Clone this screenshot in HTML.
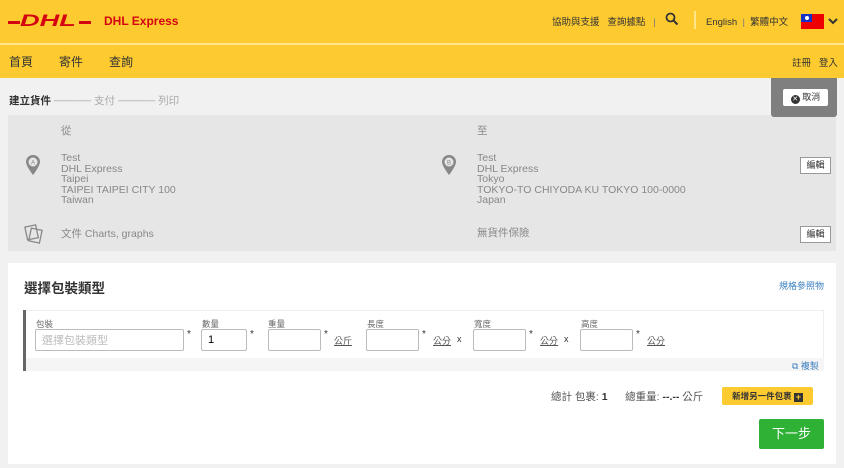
<!DOCTYPE html>
<html><head><meta charset="utf-8"><style>
*{margin:0;padding:0;box-sizing:border-box}
body{width:844px;height:468px;overflow:hidden;background:#f1f1f1;font-family:"Liberation Sans","Noto Sans CJK TC",sans-serif;color:#333;position:relative}
.a{position:absolute}
.t{font-size:10.5px;color:#888;line-height:10.5px}
.btn{position:absolute;background:#fff;border:1px solid #999;font-size:9px;color:#333;text-align:center;line-height:15px;height:17px;width:31px}
input{position:absolute;border:1px solid #bbb;border-radius:2px;height:22px;background:#fff;font-size:11px;padding-left:6px;font-family:inherit}
.lb{position:absolute;font-size:8.5px;color:#666}
.st{position:absolute;font-size:10px;color:#333}
.u{position:absolute;font-size:9px;color:#555;text-decoration:underline}
</style></head><body>
<div class="a" style="left:0;top:0;width:844px;height:43px;background:#fdcb30"></div>
<div class="a" style="left:0;top:43px;width:844px;height:2px;background:#fde58a"></div>
<div class="a" style="left:0;top:45px;width:844px;height:33px;background:#fdcb30"></div>
<div class="a" style="left:8px;top:21px;width:12px;height:3px;background:#d40511"></div>
<div class="a" style="left:20px;top:11px;font:italic 900 17px 'Liberation Sans',sans-serif;color:#d40511;transform:scaleX(1.6);transform-origin:left top">DHL</div>
<div class="a" style="left:79px;top:21px;width:12px;height:3px;background:#d40511"></div>
<div class="a" style="left:104px;top:14px;font-size:12px;font-weight:bold;color:#d40511">DHL Express</div>
<div class="a" style="left:552px;top:14px;font-size:9.5px;color:#333">協助與支援&nbsp;&nbsp;&nbsp;查詢據點&nbsp;&nbsp;&nbsp;<span style="color:#777">|</span></div>
<svg class="a" style="left:665px;top:12px" width="14" height="14" viewBox="0 0 14 14"><circle cx="5.5" cy="5.5" r="4" fill="none" stroke="#333" stroke-width="1.8"/><path d="M8.5 8.5L12.5 12.5" stroke="#333" stroke-width="2"/></svg>
<div class="a" style="left:694px;top:11px;width:2px;height:18px;background:#fde58a"></div>
<div class="a" style="left:706px;top:14px;font-size:9.5px;color:#333">English&nbsp;&nbsp;<span style="color:#777">|</span>&nbsp;&nbsp;繁體中文</div>
<div class="a" style="left:801px;top:14px;width:23px;height:15px;background:#e00"></div>
<div class="a" style="left:801px;top:14px;width:11px;height:8px;background:#1530c8"></div>
<div class="a" style="left:805px;top:16px;width:4px;height:4px;background:#fff;border-radius:50%"></div>
<svg class="a" style="left:828px;top:18px" width="10" height="7"><path d="M1 1L5 5L9 1" stroke="#333" stroke-width="2" fill="none"/></svg>
<div class="a" style="left:9px;top:53px;font-size:12px;color:#333">首頁<span style="margin-left:26px">寄件</span><span style="margin-left:26px">查詢</span></div>
<div class="a" style="left:792px;top:55px;font-size:9.5px;color:#333">註冊&nbsp;&nbsp;&nbsp;登入</div>
<div class="a" style="left:9px;top:93px;font-size:10.5px;color:#333;font-weight:bold">建立貨件 <span style="font-weight:normal;color:#aaa">───── 支付 ───── 列印</span></div>
<div class="a" style="left:8px;top:115px;width:828px;height:136px;background:#e6e6e6"></div>
<div class="a" style="left:771px;top:78px;width:66px;height:39px;background:#7f7f7f;border-radius:0 0 3px 3px"></div>
<div class="a" style="left:783px;top:89px;width:45px;height:17px;background:#fff;border-radius:2px;font-size:9px;line-height:17px;text-align:center;color:#333"><span style="display:inline-block;width:9px;height:9px;border-radius:50%;background:#333;color:#fff;font-size:7px;line-height:9px;vertical-align:-1px">✕</span> 取消</div>
<div class="a t" style="left:61px;top:126px">從</div>
<div class="a t" style="left:477px;top:126px">至</div>
<svg class="a" style="left:25px;top:154px" width="16" height="22" viewBox="0 0 16 22"><path d="M8 1C4 1 1 4 1 8C1 12 8 21 8 21C8 21 15 12 15 8C15 4 12 1 8 1Z" fill="#888"/><circle cx="8" cy="8" r="4.5" fill="#e6e6e6"/><text x="8" y="10.5" font-size="6" text-anchor="middle" fill="#888">A</text></svg>
<svg class="a" style="left:441px;top:154px" width="16" height="22" viewBox="0 0 16 22"><path d="M8 1C4 1 1 4 1 8C1 12 8 21 8 21C8 21 15 12 15 8C15 4 12 1 8 1Z" fill="#888"/><circle cx="8" cy="8" r="4.5" fill="#e6e6e6"/><text x="8" y="10.5" font-size="6" text-anchor="middle" fill="#888">B</text></svg>
<div class="a t" style="left:61px;top:153px">Test<br>DHL Express<br>Taipei<br>TAIPEI TAIPEI CITY 100<br>Taiwan</div>
<div class="a t" style="left:477px;top:153px">Test<br>DHL Express<br>Tokyo<br>TOKYO-TO CHIYODA KU TOKYO 100-0000<br>Japan</div>
<svg class="a" style="left:24px;top:224px" width="20" height="20"><rect x="2" y="2" width="11" height="13" transform="rotate(-12 7 8)" fill="none" stroke="#888" stroke-width="1.3"/><rect x="6" y="5" width="11" height="13" transform="rotate(12 11 11)" fill="none" stroke="#888" stroke-width="1.3"/></svg>
<div class="a t" style="left:61px;top:229px">文件 Charts, graphs</div>
<div class="a t" style="left:477px;top:228px">無貨件保險</div>
<div class="btn" style="left:800px;top:157px">編輯</div>
<div class="btn" style="left:800px;top:226px">編輯</div>
<div class="a" style="left:8px;top:263px;width:828px;height:201px;background:#fff"></div>
<div class="a" style="left:24px;top:277px;font-size:13.5px;color:#333;font-weight:bold">選擇包裝類型</div>
<div class="a" style="left:779px;top:279px;font-size:9px;color:#3a7fc0">規格參照物</div>
<div class="a" style="left:23px;top:310px;width:801px;height:61px;border:1px solid #eee;background:#fff"></div>
<div class="a" style="left:24px;top:358px;width:800px;height:13px;background:#f5f5f5"></div>
<div class="a" style="left:23px;top:310px;width:3px;height:61px;background:#666"></div>
<div class="lb" style="left:36px;top:318px">包裝</div>
<input style="left:35px;top:329px;width:149px;color:#bbb" value="選擇包裝類型">
<div class="st" style="left:187px;top:329px">*</div>
<div class="lb" style="left:202px;top:318px">數量</div>
<input style="left:201px;top:329px;width:46px" value="1">
<div class="st" style="left:250px;top:329px">*</div>
<div class="lb" style="left:268px;top:318px">重量</div>
<input style="left:268px;top:329px;width:53px">
<div class="st" style="left:324px;top:329px">*</div>
<div class="u" style="left:334px;top:334px">公斤</div>
<div class="lb" style="left:367px;top:318px">長度</div>
<input style="left:366px;top:329px;width:53px">
<div class="st" style="left:422px;top:329px">*</div>
<div class="u" style="left:433px;top:334px">公分</div><div class="st" style="left:457px;top:334px;font-size:9px">x</div>
<div class="lb" style="left:474px;top:318px">寬度</div>
<input style="left:473px;top:329px;width:53px">
<div class="st" style="left:529px;top:329px">*</div>
<div class="u" style="left:540px;top:334px">公分</div><div class="st" style="left:564px;top:334px;font-size:9px">x</div>
<div class="lb" style="left:581px;top:318px">高度</div>
<input style="left:580px;top:329px;width:53px">
<div class="st" style="left:636px;top:329px">*</div>
<div class="u" style="left:647px;top:334px">公分</div>
<div class="a" style="left:792px;top:359px;font-size:9px;color:#3a7fc0">⧉ 複製</div>
<div class="a" style="left:551px;top:389px;font-size:10.5px;color:#555">總計 包裹: <b style="color:#333">1</b>&nbsp;&nbsp;&nbsp;&nbsp;&nbsp;&nbsp;總重量: <b style="color:#333">--.--</b> 公斤</div>
<div class="a" style="left:722px;top:387px;width:91px;height:18px;background:#fdcb30;border-radius:2px;font-size:8.5px;line-height:18px;text-align:center;color:#333;font-weight:bold">新增另一件包裹 <span style="display:inline-block;width:9px;height:9px;background:#333;color:#fdcb30;font-size:9px;line-height:9px;vertical-align:-1px">+</span></div>
<div class="a" style="left:759px;top:419px;width:65px;height:30px;background:#2eb135;border-radius:2px;font-size:13px;line-height:30px;text-align:center;color:#fff">下一步</div>
</body></html>
